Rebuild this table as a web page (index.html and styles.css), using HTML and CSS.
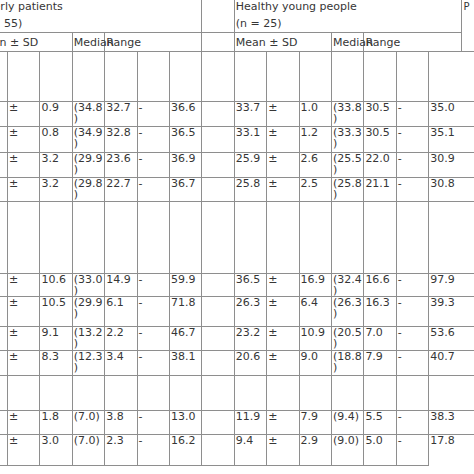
FILE: index.html
```html
<!DOCTYPE html>
<html>
<head>
<meta charset="utf-8">
<link rel="stylesheet" href="styles.css">
</head>
<body>
<div class="frame">
<table class="stats">
  <colgroup>
    <col class="c"><col class="c"><col class="c"><col class="c"><col class="c">
    <col class="c"><col class="c"><col class="c"><col class="c"><col class="c">
    <col class="c"><col class="c"><col class="c"><col class="c"><col class="c">
    <col class="cp">
  </colgroup>
  <thead>
    <tr class="h1">
      <th colspan="7">Elderly patients<br>(n = 55)</th>
      <th></th>
      <th colspan="7">Healthy young people<br>(n = 25)</th>
      <th rowspan="2" class="pcol">P</th>
    </tr>
    <tr class="h2">
      <th colspan="3">Mean ± SD</th>
      <th>Median</th>
      <th colspan="3">Range</th>
      <th></th>
      <th colspan="3">Mean ± SD</th>
      <th>Median</th>
      <th colspan="3">Range</th>
    </tr>
    <tr class="h3">
      <th></th><th></th><th></th><th></th><th></th><th></th><th></th><th></th>
      <th></th><th></th><th></th><th></th><th></th><th></th><th colspan="2"></th>
    </tr>
  </thead>
  <tbody>
    <tr class="r25">
      <td></td><td>±</td><td>0.9</td><td>(34.8<br>)</td><td>32.7</td><td>-</td><td>36.6</td><td></td>
      <td>33.7</td><td>±</td><td>1.0</td><td>(33.8<br>)</td><td>30.5</td><td>-</td><td colspan="2">35.0</td>
    </tr>
    <tr class="r26">
      <td></td><td>±</td><td>0.8</td><td>(34.9<br>)</td><td>32.8</td><td>-</td><td>36.5</td><td></td>
      <td>33.1</td><td>±</td><td>1.2</td><td>(33.3<br>)</td><td>30.5</td><td>-</td><td colspan="2">35.1</td>
    </tr>
    <tr class="r25">
      <td></td><td>±</td><td>3.2</td><td>(29.9<br>)</td><td>23.6</td><td>-</td><td>36.9</td><td></td>
      <td>25.9</td><td>±</td><td>2.6</td><td>(25.5<br>)</td><td>22.0</td><td>-</td><td colspan="2">30.9</td>
    </tr>
    <tr class="r24">
      <td></td><td>±</td><td>3.2</td><td>(29.8<br>)</td><td>22.7</td><td>-</td><td>36.7</td><td></td>
      <td>25.8</td><td>±</td><td>2.5</td><td>(25.8<br>)</td><td>21.1</td><td>-</td><td colspan="2">30.8</td>
    </tr>
    <tr class="r72">
      <td></td><td></td><td></td><td></td><td></td><td></td><td></td><td></td>
      <td></td><td></td><td></td><td></td><td></td><td></td><td colspan="2"></td>
    </tr>
    <tr class="r21">
      <td></td><td>±</td><td>10.6</td><td>(33.0<br>)</td><td>14.9</td><td>-</td><td>59.9</td><td></td>
      <td>36.5</td><td>±</td><td>16.9</td><td>(32.4<br>)</td><td>16.6</td><td>-</td><td colspan="2">97.9</td>
    </tr>
    <tr class="r30">
      <td></td><td>±</td><td>10.5</td><td>(29.9<br>)</td><td>6.1</td><td>-</td><td>71.8</td><td></td>
      <td>26.3</td><td>±</td><td>6.4</td><td>(26.3<br>)</td><td>16.3</td><td>-</td><td colspan="2">39.3</td>
    </tr>
    <tr class="r24">
      <td></td><td>±</td><td>9.1</td><td>(13.2<br>)</td><td>2.2</td><td>-</td><td>46.7</td><td></td>
      <td>23.2</td><td>±</td><td>10.9</td><td>(20.5<br>)</td><td>7.0</td><td>-</td><td colspan="2">53.6</td>
    </tr>
    <tr class="r25">
      <td></td><td>±</td><td>8.3</td><td>(12.3<br>)</td><td>3.4</td><td>-</td><td>38.1</td><td></td>
      <td>20.6</td><td>±</td><td>9.0</td><td>(18.8<br>)</td><td>7.9</td><td>-</td><td colspan="2">40.7</td>
    </tr>
    <tr class="r35">
      <td></td><td></td><td></td><td></td><td></td><td></td><td></td><td></td>
      <td></td><td></td><td></td><td></td><td></td><td></td><td colspan="2"></td>
    </tr>
    <tr class="r24">
      <td></td><td>±</td><td>1.8</td><td>(7.0)</td><td>3.8</td><td>-</td><td>13.0</td><td></td>
      <td>11.9</td><td>±</td><td>7.9</td><td>(9.4)</td><td>5.5</td><td>-</td><td colspan="2">38.3</td>
    </tr>
    <tr class="r31 last">
      <td></td><td>±</td><td>3.0</td><td>(7.0)</td><td>2.3</td><td>-</td><td>16.2</td><td></td>
      <td>9.4</td><td>±</td><td>2.9</td><td>(9.0)</td><td>5.0</td><td>-</td><td colspan="2" class="open">17.8</td>
    </tr>
  </tbody>
</table>
</div>
</body>
</html>
```
FILE: styles.css
```css
html, body {
  margin: 0;
  padding: 0;
  background: #ffffff;
  overflow: hidden;
}

.frame {
  width: 474px;
  height: 474px;
  overflow: hidden;
}

.stats {
  border-collapse: collapse;
  table-layout: fixed;
  width: 526px;
  margin-left: -25.4px;
  margin-top: -4px;
  font-family: "DejaVu Sans", sans-serif;
  font-size: 11px;
  color: #363636;
}

.stats col.c { width: 32.4px; }
.stats col.cp { width: 40px; }

.stats th,
.stats td {
  border: 1px solid #8e8e8e;
  padding: 0 1px;
  vertical-align: top;
  text-align: left;
  white-space: nowrap;
  overflow: visible;
  font-weight: normal;
}

.stats th {
  line-height: 17px;
  padding-top: 1px;
}
.stats td { line-height: 11px; }

.stats th.pcol {
  font-size: 10px;
  padding-left: 2px;
}

.h1 { height: 34px; }
.h2 { height: 18px; }
.h3 { height: 50px; }
.r21 { height: 21px; }
.r24 { height: 24px; }
.r25 { height: 25px; }
.r26 { height: 26px; }
.r30 { height: 30px; }
.r31 { height: 31px; }
.r35 { height: 35px; }
.r72 { height: 72px; }

.stats td.open { border-bottom: none; }
```
